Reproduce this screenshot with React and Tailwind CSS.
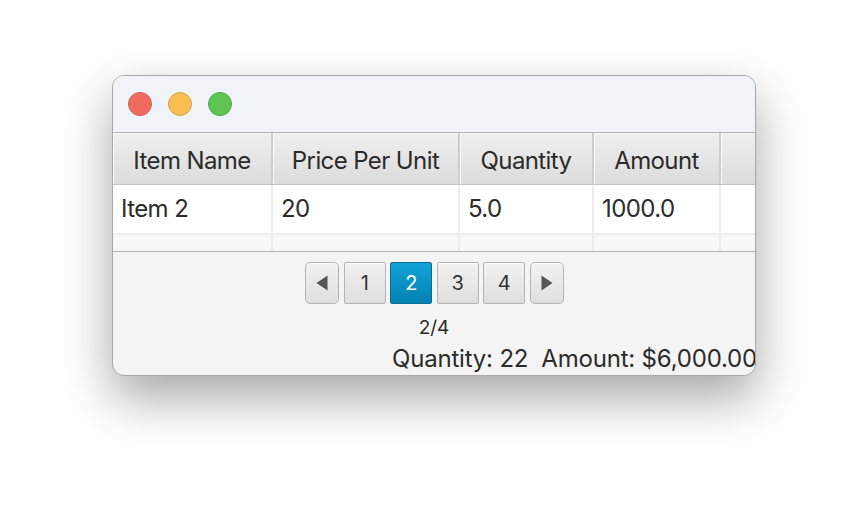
import React from 'react'

const columns = [
  { label: 'Item Name', w: 'w-[160px]' },
  { label: 'Price Per Unit', w: 'w-[187px]' },
  { label: 'Quantity', w: 'w-[134px]' },
  { label: 'Amount', w: 'w-[127px]' },
]

const row = ['Item 2', '20', '5.0', '1000.0']

const PageButton = ({ children, active, arrow }) => (
  <div
    className={
      'flex h-[42px] items-center justify-center border text-[20px] ' +
      (arrow ? 'w-[34px] rounded-[5px] ' : 'w-[42px] rounded-[2px] ') +
      (active
        ? 'border-[#0b6d96] bg-gradient-to-b from-[#12a3d6] to-[#0282b3] text-white'
        : 'border-[#b4b4b4] bg-gradient-to-b from-[#f2f2f2] to-[#dedede] text-[#333] shadow-[inset_0_1px_0_#fff]')
    }
  >
    {children}
  </div>
)

const App = () => {
  return (
    <div className="h-[524px] w-[868px] bg-white pt-[75px]" style={{ fontFamily: 'Inter, "Noto Sans", sans-serif' }}>
      <div className="mx-auto flex h-[301px] w-[644px] flex-col overflow-hidden rounded-[12px] border border-[#a8a8a8] bg-[#f4f4f4] shadow-[0_22px_50px_rgba(0,0,0,0.35)]">
        {/* title bar */}
        <div className="flex h-[56px] shrink-0 items-center gap-[16px] bg-[#f0f4f9] pl-[15px]">
          <div className="h-[24px] w-[24px] rounded-full border border-[#dc5a50] bg-[#ef6a5f]" />
          <div className="h-[24px] w-[24px] rounded-full border border-[#dba33f] bg-[#f6bf4f]" />
          <div className="h-[24px] w-[24px] rounded-full border border-[#4aa83f] bg-[#5ec452]" />
        </div>

        {/* table */}
        <div className="flex flex-col border-y border-[#b2b2b2] text-[#2b2b2b]">
          <div className="flex h-[52px] border-b border-[#c4c4c4]">
            {columns.map((c) => (
              <div
                key={c.label}
                className={c.w + ' flex items-center justify-center border-r-2 border-[#cdcdcd] bg-gradient-to-b from-[#efefef] to-[#dcdcdc] pt-[4px] text-[24px] tracking-[-0.6px] shadow-[inset_1px_1px_0_#fafafa]'}
              >
                {c.label}
              </div>
            ))}
            <div className="flex-1 bg-gradient-to-b from-[#efefef] to-[#dcdcdc] shadow-[inset_1px_1px_0_#fafafa]" />
          </div>
          <div className="flex h-[48px] bg-white">
            {row.map((v, i) => (
              <div key={i} className={columns[i].w + ' flex items-center border-r-2 border-[#ececec] pl-[8px] text-[24px] tracking-[-0.6px]'}>
                {v}
              </div>
            ))}
            <div className="flex-1" />
          </div>
          <div className="flex h-[18px] border-t-2 border-[#ececec] bg-[#f8f8f8]">
            {columns.map((c) => (
              <div key={c.label} className={c.w + ' border-r-2 border-[#ececec]'} />
            ))}
            <div className="flex-1" />
          </div>
        </div>

        {/* pagination */}
        <div className="mt-[10px] flex justify-center gap-[4.5px] pl-[1px]">
          <PageButton arrow>
            <svg width="12" height="16" viewBox="0 0 12 16"><path d="M11.5 0.5L0.5 8l11 7.5z" fill="#555" /></svg>
          </PageButton>
          <PageButton>1</PageButton>
          <PageButton active>2</PageButton>
          <PageButton>3</PageButton>
          <PageButton>4</PageButton>
          <PageButton arrow>
            <svg width="12" height="16" viewBox="0 0 12 16"><path d="M0.5 0.5l11 7.5-11 7.5z" fill="#555" /></svg>
          </PageButton>
        </div>
        <div className="mt-[12px] text-center text-[19px] leading-[24px] text-[#2b2b2b]">2/4</div>
        <div className="-mr-[2px] mt-[5px] whitespace-nowrap text-right text-[24px] leading-[28px] tracking-[-0.2px] text-[#2b2b2b]">
          Quantity: 22&nbsp; Amount: $6,000.00
        </div>
      </div>
    </div>
  )
}

export default App
